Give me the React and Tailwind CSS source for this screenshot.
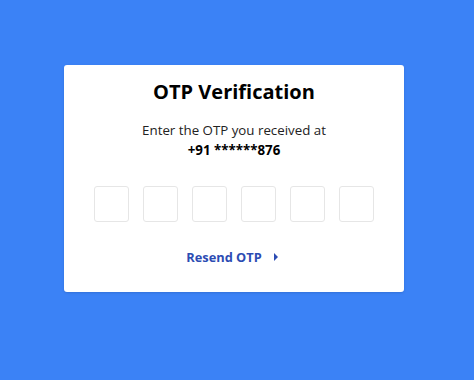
import React from 'react';

const App = () => {
  const digits = [0, 1, 2, 3, 4, 5];
  return (
    <div className="min-h-[380px] w-full bg-[#3b82f6] pt-[65px] pl-[64px]" style={{ fontFamily: '"Open Sans", "Noto Sans", sans-serif' }}>
      <div className="w-[340px] h-[227px] bg-white rounded-[3px] shadow-sm flex flex-col items-center">
        <h1 className="mt-[13px] text-[20px] leading-[28px] font-bold text-black">OTP Verification</h1>
        <p className="mt-[14px] text-[13.3px] leading-[20px] text-[#222]">Enter the OTP you received at</p>
        <p className="text-[13.3px] leading-[20px] font-bold text-black">+91 ******876</p>

        <div className="mt-[26px] flex gap-[14px]">
          {digits.map(d => (
            <input
              key={d}
              maxLength={1}
              className="w-[35px] h-[36px] rounded-[3px] border border-[#e6e6e6] text-center outline-none"
            />
          ))}
        </div>

        <button className="mt-[25px] -ml-[4px] flex items-center gap-[12px] text-[12.8px] leading-[20px] font-bold text-[#2c4cb3]">
          Resend OTP
          <svg width="4" height="8" viewBox="0 0 4 8"><path d="M0 0 L4 4 L0 8 Z" fill="#2c4cb3" /></svg>
        </button>
      </div>
    </div>
  );
};

export default App;
